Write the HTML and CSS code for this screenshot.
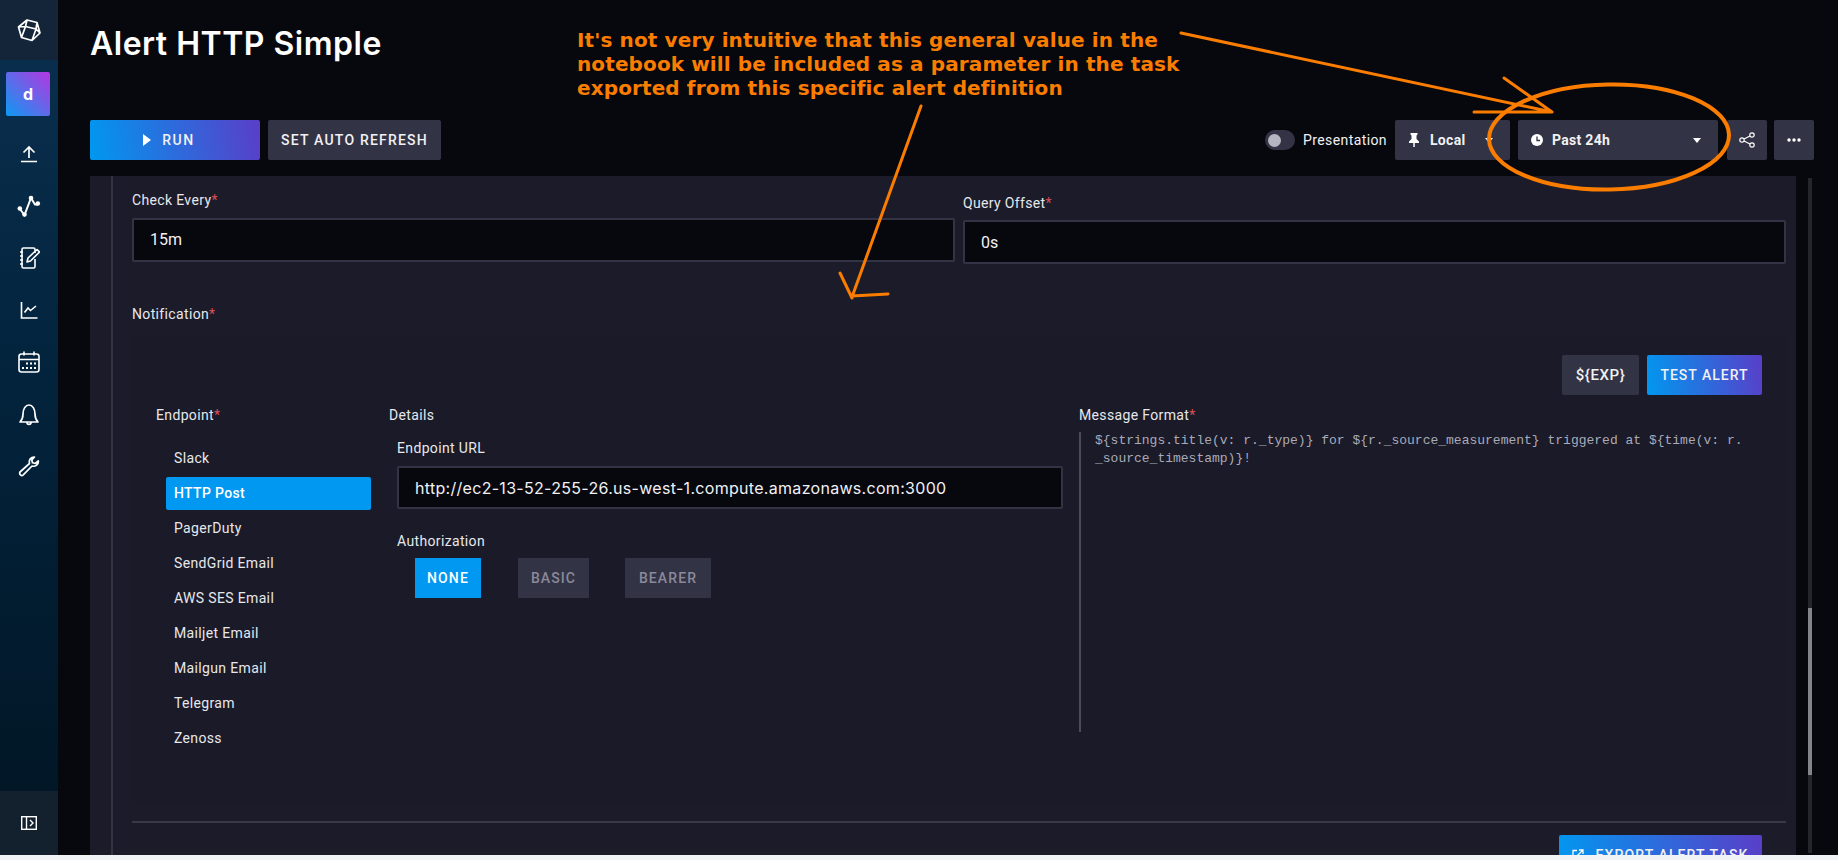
FILE: index.html
```html
<!DOCTYPE html>
<html lang="en">
<head>
<meta charset="utf-8">
<title>Alert HTTP Simple</title>
<link rel="stylesheet" href="styles.css">
</head>
<body>
<div class="app">
  <nav class="sidebar">
    <div class="logo">
      <svg class="ic" width="24" height="24" viewBox="0 0 24 24" fill="none" stroke="#fff" stroke-width="1.7" stroke-linejoin="round"><path d="M10 2 20 4.5 23 15 15 22.5 4.5 19.500 1.500 9ZM10 2 8.500 8.500 1.500 9M8.500 8.500 19 11 20 4.500M19 11 15 22.500M19 11 23 15M8.500 8.500 4.500 19.500"/></svg>
    </div>
    <div class="org">d</div>
    <div class="nav-item"><svg class="ic" width="20" height="20" viewBox="0 0 20 20" fill="none" stroke="#fff" stroke-width="1.7"><path d="M10 14V3M4.500 8.500 10 3l5.500 5.500M2 17.500h16"/></svg></div>
    <div class="nav-item"><svg class="ic" width="24" height="24" viewBox="0 0 24 24" fill="none" stroke="#fff" stroke-width="2"><path d="M2.500 14.500 7.500 21 14 4l4 6.500h3"/><g fill="#fff" stroke="none"><circle cx="2.800" cy="14.500" r="2.300"/><circle cx="7.500" cy="20.500" r="2.300"/><circle cx="14" cy="4" r="2.300"/><circle cx="20.800" cy="9.500" r="2.300"/></g></svg></div>
    <div class="nav-item"><svg class="ic" width="22" height="24" viewBox="0 0 22 24" fill="none" stroke="#fff" stroke-width="1.600" stroke-linejoin="round"><path d="M17 7V3.500A1.500 1.500 0 0 0 15.500 2H5.500A1.500 1.500 0 0 0 4 3.500v17A1.500 1.500 0 0 0 5.500 22h10a1.500 1.500 0 0 0 1.500-1.500V13M2 6h3M2 10h3M2 14h3M2 18h3M9 16l1-4 9-8.500 2.500 2.500-9 9Z"/></svg></div>
    <div class="nav-item"><svg class="ic" width="20" height="20" viewBox="0 0 20 20" fill="none" stroke="#fff" stroke-width="1.600"><path d="M2.500 2v16h16M5.500 12.500 9 8l2.500 2.500L17 6"/></svg></div>
    <div class="nav-item"><svg class="ic" width="24" height="24" viewBox="0 0 24 24" fill="none" stroke="#fff" stroke-width="1.600"><rect x="2" y="4" width="20" height="18" rx="2.500"/><path d="M2 9.500h20M7 1.500v4M17 1.500v4"/><path stroke-dasharray="2 2" stroke-width="2" d="M9 13.500h10M5 18h14"/></svg></div>
    <div class="nav-item"><svg class="ic" width="22" height="24" viewBox="0 0 22 24" fill="none" stroke="#fff" stroke-width="1.700" stroke-linejoin="round"><path d="M2 20c2-2 3-4 3-8 0-5 2.500-9 6-9s6 4 6 9c0 4 1 6 3 8ZM9 20.500c0 2.500 4 2.500 4 0"/></svg></div>
    <div class="nav-item"><svg class="ic" width="22" height="22" viewBox="0 0 22 22" fill="none" stroke="#fff" stroke-width="1.700" stroke-linejoin="round"><path d="M2 17 11.500 8.500C10.500 5 13 1.800 16.500 2L13.800 5l.7 2.800 2.800.7L20.300 5.800C20.800 9.500 17.500 12 14 11L5 20.200C3.500 21.500.800 19 2 17Z"/></svg></div>
    <div class="collapse"><svg class="ic" width="16" height="14" viewBox="0 0 16 14" fill="none" stroke="#fff" stroke-width="1.400"><rect x=".700" y=".700" width="14.600" height="12.600"/><path d="M5.500 1v12M9 4l3 3-3 3"/></svg></div>
  </nav>

  <main class="main">
    <h1 class="title">Alert HTTP Simple</h1>
    <div class="toolbar">
      <button class="btn grad run"><svg width="8" height="12" viewBox="0 0 8 12"><path fill="#fff" d="M0 0l8 6-8 6z"/></svg><span>RUN</span></button>
      <button class="btn dark refresh">SET AUTO REFRESH</button>
      <div class="tools">
        <span class="toggle"><i></i></span>
        <span class="pres">Presentation</span>
        <div class="drop local"><svg width="10" height="14" viewBox="0 0 10 14"><path fill="#fff" d="M1.500 0h7v1.500L7.500 2.500V6L10 8.500V10H5.800v4h-1.500v-4H0V8.500L2.500 6V2.500L1.500 1.500z"/></svg><b>Local</b><svg class="caret" width="8" height="5" viewBox="0 0 8 5"><path fill="#fff" d="M0 0h8L4 5z"/></svg></div>
        <div class="drop past"><svg width="12" height="12" viewBox="0 0 12 12"><circle cx="6" cy="6" r="6" fill="#fff"/><path d="M6 2.500V6.500H9" fill="none" stroke="#333346" stroke-width="1.300"/></svg><b>Past 24h</b><svg class="caret" width="8" height="5" viewBox="0 0 8 5"><path fill="#fff" d="M0 0h8L4 5z"/></svg></div>
        <div class="square share"><svg width="16" height="16" viewBox="0 0 16 16" fill="none" stroke="#fff" stroke-width="1.200"><circle cx="3" cy="8" r="2.200"/><circle cx="13" cy="3" r="2.200"/><circle cx="13" cy="13" r="2.200"/><path d="M5 7l6-3M5 9l6 3"/></svg></div>
        <div class="square"><svg width="14" height="4" viewBox="0 0 14 4" fill="#fff"><circle cx="2" cy="2" r="1.700"/><circle cx="7" cy="2" r="1.700"/><circle cx="12" cy="2" r="1.700"/></svg></div>
      </div>
    </div>

    <div class="workarea">
      <section class="panel">
        <div class="section">
          <div class="row">
            <div class="field">
              <label class="lbl">Check Every<em>*</em></label>
              <div class="input tall">15m</div>
            </div>
            <div class="field low">
              <label class="lbl">Query Offset<em>*</em></label>
              <div class="input tall">0s</div>
            </div>
          </div>
          <label class="lbl notif">Notification<em>*</em></label>
          <div class="box">
            <div class="box-actions">
              <button class="btn dark exp">${EXP}</button>
              <button class="btn grad test">TEST ALERT</button>
            </div>
            <div class="cols">
              <div class="col-end">
                <label class="lbl">Endpoint<em>*</em></label>
                <ul class="endpoints">
                  <li>Slack</li>
                  <li class="on">HTTP Post</li>
                  <li>PagerDuty</li>
                  <li>SendGrid Email</li>
                  <li>AWS SES Email</li>
                  <li>Mailjet Email</li>
                  <li>Mailgun Email</li>
                  <li>Telegram</li>
                  <li>Zenoss</li>
                </ul>
              </div>
              <div class="col-det">
                <label class="lbl">Details</label>
                <div class="det-body">
                  <label class="lbl">Endpoint URL</label>
                  <div class="input url">http://ec2-13-52-255-26.us-west-1.compute.amazonaws.com:3000</div>
                  <label class="lbl auth">Authorization</label>
                  <div class="auth-btns">
                    <button class="btn none">NONE</button>
                    <button class="btn dim basic">BASIC</button>
                    <button class="btn dim bearer">BEARER</button>
                  </div>
                </div>
              </div>
              <div class="col-msg">
                <label class="lbl">Message Format<em>*</em></label>
                <div class="code"><span>${strings.title(v: r._type)} for ${r._source_measurement} triggered at ${time(v: r.</span><span>_source_timestamp)}!</span></div>
              </div>
            </div>
          </div>
          <div class="rule"></div>
          <div class="foot">
            <button class="btn grad export"><svg width="12" height="12" viewBox="0 0 12 12" fill="none" stroke="#fff" stroke-width="1.300"><path d="M5 1.500H1v9.500h9.500V7M5 7l5.500-5.500M7 1h4v4"/></svg><span>EXPORT ALERT TASK</span></button>
          </div>
        </div>
      </section>
      <div class="scrollbar"><i></i></div>
    </div>
  </main>
</div>
<div class="strip"></div>

<svg class="ink" width="1838" height="860" viewBox="0 0 1838 860" fill="none" stroke="#fb7d00" stroke-linecap="round">
  <ellipse cx="1609" cy="137" rx="120" ry="52.500" stroke-width="4" transform="rotate(-1 1609 137)"/>
  <path stroke-width="3" d="M1181 33 1552 112M1504 78 1552 112M1474 112H1552"/>
  <path stroke-width="3" d="M921 106 852 297M840 273 852 298M852 296 888 294"/>
</svg>
<p class="note">It's not very intuitive that this general value in the<br>notebook will be included as a parameter in the task<br>exported from this specific alert definition</p>
</body>
</html>
```

FILE: styles.css
```css
* { box-sizing: border-box; }
html, body { margin: 0; padding: 0; height: 860px; overflow: hidden; background: #f1f3f5; }
body { font-family: Roboto, "Liberation Sans", sans-serif; color: #f1f1f3; }
.app { display: flex; height: 855px; overflow: hidden; background: #07070e; }
.strip { height: 5px; background: #f1f3f5; }

.sidebar { width: 58px; flex: none; display: flex; flex-direction: column; background: linear-gradient(180deg, #0a3050 0%, #03233c 45%, #011523 100%); }
.logo { height: 60px; flex: none; display: flex; align-items: center; justify-content: center; background: #14253a; }
.org { width: 44px; height: 44px; flex: none; margin: 12px 8px 12px 6px; border-radius: 2px; display: flex; align-items: center; justify-content: center; font: 700 16px Inter, sans-serif; color: #fff; background: linear-gradient(45deg, #0d9af2 0%, #b636e0 100%); }
.nav-item { height: 52px; flex: none; display: flex; align-items: center; justify-content: center; }
.collapse { height: 64px; flex: none; margin-top: auto; display: flex; align-items: center; justify-content: center; background: #13212f; }

.main { flex: 1; min-width: 0; padding: 0 0 0 32px; display: flex; flex-direction: column; }
.title { margin: 0; height: 120px; padding-top: 25px; font: 600 32px/38px Inter, Roboto, sans-serif; letter-spacing: .5px; color: #fff; }
.toolbar { height: 40px; flex: none; display: flex; gap: 8px; margin-right: 24px; }
.btn { border: 0; border-radius: 2px; height: 40px; padding: 0; display: flex; align-items: center; justify-content: center; font: 500 14px Roboto, sans-serif; letter-spacing: 1.1px; color: #f1f1f3; flex: none; }
.grad { background: linear-gradient(80deg, #0098f0 0%, #5a3ec8 100%); }
.dark { background: #333346; }
.run { width: 170px; gap: 11px; padding-right: 12px; letter-spacing: 1.5px; }
.refresh { width: 173px; letter-spacing: 1.2px; }
.tools { margin-left: auto; display: flex; align-items: center; }
.toggle { width: 30px; height: 20px; border-radius: 10px; background: #333346; display: flex; align-items: center; padding-left: 3px; }
.toggle i { width: 13px; height: 13px; border-radius: 50%; background: #b5b5c2; }
.pres { margin-left: 8px; font-size: 14px; width: 92px; letter-spacing: .4px; white-space: nowrap; }
.drop { height: 40px; border-radius: 2px; background: #333346; display: flex; align-items: center; position: relative; font-size: 14px; }
.drop b { font-weight: 700; letter-spacing: .3px; }
.local { width: 115px; padding-left: 14px; gap: 11px; margin-right: 8px; }
.past { width: 200px; padding-left: 13px; gap: 9px; margin-right: 9px; }
.caret { margin-left: auto; margin-right: 17px; }
.square { width: 40px; height: 40px; border-radius: 2px; background: #333346; display: flex; align-items: center; justify-content: center; }
.share { margin-right: 7px; }

.workarea { flex: 1; min-height: 0; margin-top: 16px; display: flex; }
.panel { width: 1706px; flex: none; background: #1b1b2a; padding: 0 10px 0 21px; overflow: hidden; }
.section { border-left: 2px solid #333346; padding: 14px 0 0 19px; height: 700px; }
.scrollbar { width: 4px; margin-left: 12px; margin-top: 2px; height: 675px; background: #25252b; padding-top: 430px; }
.scrollbar i { display: block; height: 167px; background: #858589; }

.row { display: flex; gap: 8px; }
.field { width: 823px; }
.low { padding-top: 2px; }
.low .lbl { position: relative; top: 1px; }
.lbl { display: block; font-size: 14px; line-height: 20px; color: #e7e8ec; letter-spacing: .35px; }
.lbl em { font-style: normal; color: #dc4e58; }
.input { background: #07070e; border: 2px solid #333346; border-radius: 2px; color: #f1f1f3; font-size: 16px; display: flex; align-items: center; }
.tall { height: 44px; margin-top: 8px; padding: 0 16px 2px; }
.low .tall { padding-bottom: 0; }
.notif { margin-top: 40px; }

.box { margin-top: 11px; height: 469px; background: #1a1a28; padding: 20px 24px 0 24px; }
.box-actions { display: flex; justify-content: flex-end; gap: 8px; }
.exp { width: 77px; letter-spacing: .6px; font-size: 15px; }
.test { width: 115px; letter-spacing: 1px; }
.cols { display: flex; margin-top: 10px; }
.col-end { width: 233px; flex: none; }
.endpoints { list-style: none; margin: 17px 0 0 10px; padding: 0; width: 205px; }
.endpoints li { height: 33px; margin-bottom: 2px; padding: 0 0 2px 8px; display: flex; align-items: center; font-size: 14px; color: #e7e8ec; border-radius: 2px; letter-spacing: .35px; }
.endpoints .on { background: #0098f0; color: #fff; font-weight: 500; }
.col-det { width: 690px; flex: none; }
.det-body { padding: 13px 0 0 8px; }
.url { width: 666px; height: 43px; margin-top: 8px; padding-left: 16px; font-family: Inter, Roboto, sans-serif; letter-spacing: .3px; white-space: nowrap; }
.auth { margin-top: 22px; }
.auth-btns { display: flex; padding-left: 18px; margin-top: 7px; }
.none { width: 66px; background: #0098f0; color: #fff; border-radius: 0; }
.dim { background: #333346; color: #8a8a9a; border-radius: 0; }
.basic { width: 71px; margin-left: 37px; }
.bearer { width: 86px; margin-left: 36px; }
.col-msg { flex: 1; min-width: 0; }
.code { margin-top: 7px; height: 300px; border-left: 2px solid #4a4a58; padding-left: 14px; font: 13px/18px "Liberation Mono", monospace; color: #a9abb8; }
.code span { display: block; white-space: nowrap; }

.rule { margin-top: 17px; height: 2px; background: #383846; }
.foot { display: flex; justify-content: flex-end; padding: 12px 24px 0 0; }
.export { width: 203px; gap: 11px; }

.ink { position: absolute; left: 0; top: 0; pointer-events: none; }
.note { position: absolute; left: 577px; top: 28px; margin: 0; font: 700 20px/24px "DejaVu Sans", sans-serif; letter-spacing: .12px; color: #fb7d00; white-space: nowrap; }
```
